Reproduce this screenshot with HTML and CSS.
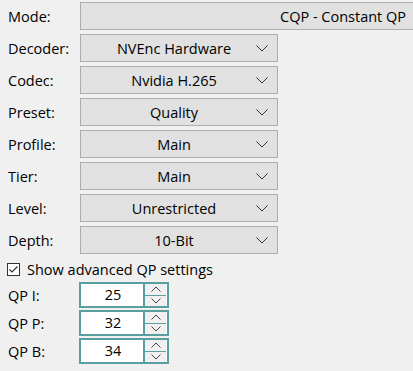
FILE: index.html
```html
<!DOCTYPE html>
<html lang="en">
<head>
    <meta charset="UTF-8">
    <title>Encoder settings</title>
    <link rel="stylesheet" href="styles.css">
</head>
<body>
    <div class="form">
        <div class="row">
            <label>Mode:</label>
            <div class="mode-box">CQP - Constant QP</div>
        </div>
        <div class="row">
            <label>Decoder:</label>
            <div class="combo"><span>NVEnc Hardware</span><svg class="chev" width="12" height="7" viewBox="0 0 12 7"><path d="M0.5 0.5 L6 6 L11.5 0.5" fill="none" stroke="#333" stroke-width="1"/></svg></div>
        </div>
        <div class="row">
            <label>Codec:</label>
            <div class="combo"><span>Nvidia H.265</span><svg class="chev" width="12" height="7" viewBox="0 0 12 7"><path d="M0.5 0.5 L6 6 L11.5 0.5" fill="none" stroke="#333" stroke-width="1"/></svg></div>
        </div>
        <div class="row">
            <label>Preset:</label>
            <div class="combo"><span>Quality</span><svg class="chev" width="12" height="7" viewBox="0 0 12 7"><path d="M0.5 0.5 L6 6 L11.5 0.5" fill="none" stroke="#333" stroke-width="1"/></svg></div>
        </div>
        <div class="row">
            <label>Profile:</label>
            <div class="combo"><span>Main</span><svg class="chev" width="12" height="7" viewBox="0 0 12 7"><path d="M0.5 0.5 L6 6 L11.5 0.5" fill="none" stroke="#333" stroke-width="1"/></svg></div>
        </div>
        <div class="row">
            <label>Tier:</label>
            <div class="combo"><span>Main</span><svg class="chev" width="12" height="7" viewBox="0 0 12 7"><path d="M0.5 0.5 L6 6 L11.5 0.5" fill="none" stroke="#333" stroke-width="1"/></svg></div>
        </div>
        <div class="row">
            <label>Level:</label>
            <div class="combo"><span>Unrestricted</span><svg class="chev" width="12" height="7" viewBox="0 0 12 7"><path d="M0.5 0.5 L6 6 L11.5 0.5" fill="none" stroke="#333" stroke-width="1"/></svg></div>
        </div>
        <div class="row">
            <label>Depth:</label>
            <div class="combo"><span>10-Bit</span><svg class="chev" width="12" height="7" viewBox="0 0 12 7"><path d="M0.5 0.5 L6 6 L11.5 0.5" fill="none" stroke="#333" stroke-width="1"/></svg></div>
        </div>

        <div class="check-row">
            <span class="checkbox"><svg width="11" height="11" viewBox="0 0 11 11"><path d="M1.5 5.5 L4 8 L9.5 2.5" fill="none" stroke="#333" stroke-width="1.2"/></svg></span>
            <span>Show advanced QP settings</span>
        </div>

        <div class="qp-row">
            <label>QP I:</label>
            <div class="spin"><span class="val">25</span><div class="arrows"><div class="arr"><svg width="10" height="6" viewBox="0 0 10 6"><path d="M0.5 5.5 L5 1 L9.5 5.5" fill="none" stroke="#444"/></svg></div><div class="arr"><svg width="10" height="6" viewBox="0 0 10 6"><path d="M0.5 0.5 L5 5 L9.5 0.5" fill="none" stroke="#444"/></svg></div></div></div>
        </div>
        <div class="qp-row">
            <label>QP P:</label>
            <div class="spin"><span class="val">32</span><div class="arrows"><div class="arr"><svg width="10" height="6" viewBox="0 0 10 6"><path d="M0.5 5.5 L5 1 L9.5 5.5" fill="none" stroke="#444"/></svg></div><div class="arr"><svg width="10" height="6" viewBox="0 0 10 6"><path d="M0.5 0.5 L5 5 L9.5 0.5" fill="none" stroke="#444"/></svg></div></div></div>
        </div>
        <div class="qp-row">
            <label>QP B:</label>
            <div class="spin"><span class="val">34</span><div class="arrows"><div class="arr"><svg width="10" height="6" viewBox="0 0 10 6"><path d="M0.5 5.5 L5 1 L9.5 5.5" fill="none" stroke="#444"/></svg></div><div class="arr"><svg width="10" height="6" viewBox="0 0 10 6"><path d="M0.5 0.5 L5 5 L9.5 0.5" fill="none" stroke="#444"/></svg></div></div></div>
        </div>
    </div>
</body>
</html>
```

FILE: styles.css
```css
body {
    margin: 0;
    background: #f0f0f0;
    font-family: "Open Sans", "Noto Sans", sans-serif;
    font-size: 14.5px;
    color: #000;
    overflow: hidden;
}
.form {
    padding: 2px 0 0 8px;
}
.row {
    display: flex;
    align-items: center;
    height: 28px;
    margin-bottom: 4px;
}
.row label {
    width: 72px;
    flex: none;
}
.mode-box {
    flex: none;
    width: 340px;
    height: 28px;
    box-sizing: border-box;
    border: 1px solid #adadad;
    background: #e1e1e1;
    display: flex;
    align-items: center;
    padding-left: 199px;
}
.combo {
    width: 198px;
    height: 28px;
    box-sizing: border-box;
    border: 1px solid #adadad;
    background: #e1e1e1;
    display: flex;
    align-items: center;
    position: relative;
}
.combo span {
    flex: 1;
    text-align: center;
    padding-right: 10px;
}
.chev {
    position: absolute;
    right: 9px;
    top: 10px;
}
.check-row {
    display: flex;
    align-items: center;
    gap: 7px;
    margin-top: 3px;
    height: 22px;
    margin-left: -1px;
}
.checkbox {
    width: 13px;
    height: 13px;
    box-sizing: border-box;
    border: 1px solid #333;
    background: #fff;
    display: flex;
    align-items: center;
    justify-content: center;
}
.qp-row {
    display: flex;
    align-items: center;
    height: 26px;
    margin-top: 2px;
}
.qp-row:first-of-type {
    margin-top: 0;
}
.qp-row label {
    width: 71px;
    flex: none;
}
.spin {
    width: 90px;
    height: 26px;
    box-sizing: border-box;
    border: 2px solid #5b9ea0;
    background: #fff;
    display: flex;
}
.val {
    flex: 1;
    text-align: center;
    line-height: 22px;
    padding-left: 2px;
}
.arrows {
    width: 21px;
    display: flex;
    flex-direction: column;
    border-left: 2px solid #5b9ea0;
    margin: 0 1px 0 0;
}
.arr {
    flex: 1;
    display: flex;
    align-items: center;
    justify-content: center;
    background: #f0f0f0;
}
.arr:first-child {
    border-bottom: 1px solid #5b9ea0;
}
```
